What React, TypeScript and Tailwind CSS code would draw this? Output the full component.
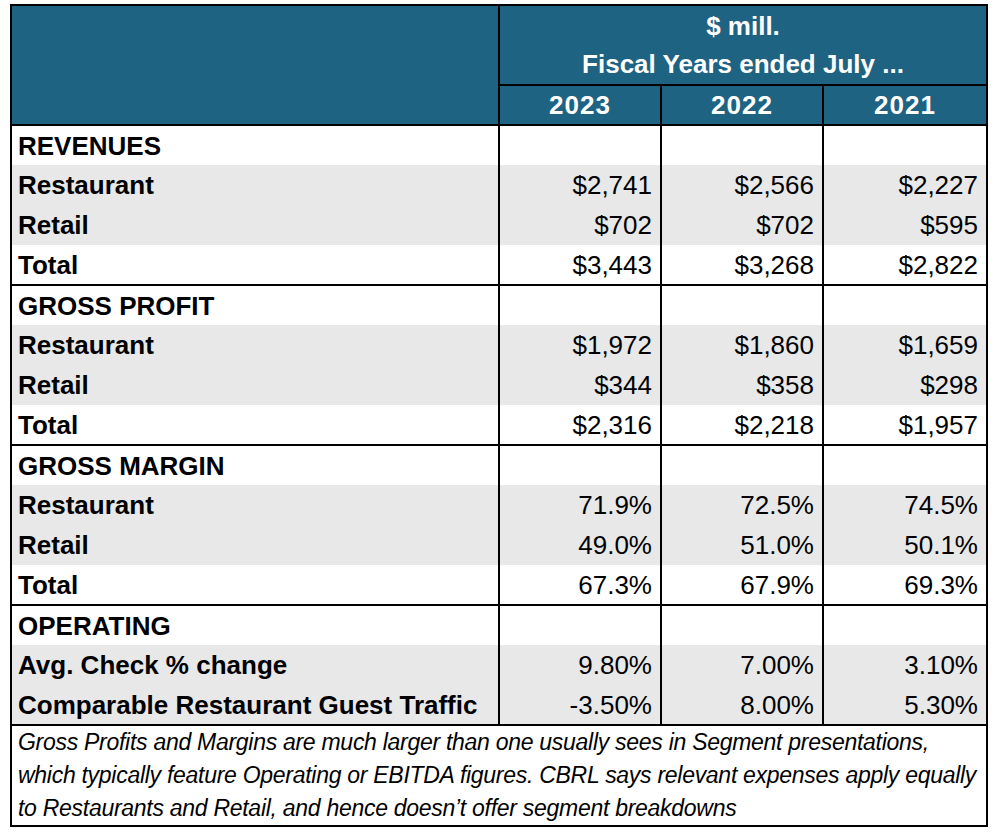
const sections = [
  {
    title: "REVENUES",
    rows: [
      { label: "Restaurant", vals: ["$2,741", "$2,566", "$2,227"] },
      { label: "Retail", vals: ["$702", "$702", "$595"] },
      { label: "Total", vals: ["$3,443", "$3,268", "$2,822"], total: true },
    ],
  },
  {
    title: "GROSS PROFIT",
    rows: [
      { label: "Restaurant", vals: ["$1,972", "$1,860", "$1,659"] },
      { label: "Retail", vals: ["$344", "$358", "$298"] },
      { label: "Total", vals: ["$2,316", "$2,218", "$1,957"], total: true },
    ],
  },
  {
    title: "GROSS MARGIN",
    rows: [
      { label: "Restaurant", vals: ["71.9%", "72.5%", "74.5%"] },
      { label: "Retail", vals: ["49.0%", "51.0%", "50.1%"] },
      { label: "Total", vals: ["67.3%", "67.9%", "69.3%"], total: true },
    ],
  },
  {
    title: "OPERATING",
    rows: [
      { label: "Avg. Check % change", vals: ["9.80%", "7.00%", "3.10%"] },
      { label: "Comparable Restaurant Guest Traffic", vals: ["-3.50%", "8.00%", "5.30%"] },
    ],
  },
];

export default function App() {
  return (
    <div className="w-[996px] h-[838px] bg-white pt-[4px] pl-[10px] font-['Liberation_Sans',Arial,sans-serif] text-black">
      <table className="border-collapse border-2 border-black table-fixed w-[976px]">
        <colgroup>
          <col className="w-[488px]" />
          <col className="w-[162px]" />
          <col className="w-[162px]" />
          <col className="w-[164px]" />
        </colgroup>
        <thead className="bg-[#1f6382] text-white font-bold text-[26px]">
          <tr>
            <th rowSpan={2} className="border-2 border-black" />
            <th colSpan={3} className="border-2 border-black h-[80px] leading-[38px] font-bold">
              <div>$ mill.</div>
              <div>Fiscal Years ended July ...</div>
            </th>
          </tr>
          <tr>
            {["2023", "2022", "2021"].map((y) => (
              <th key={y} className="border-2 border-black h-[40px] leading-[30px] font-bold tracking-[1px]">
                {y}
              </th>
            ))}
          </tr>
        </thead>
        {sections.map((s) => (
          <tbody key={s.title} className="border-2 border-black text-[26px] leading-[30px]">
            <tr className="h-[40px]">
              <td className="border-x-2 border-black pl-[6px] font-bold">{s.title}</td>
              <td className="border-x-2 border-black" />
              <td className="border-x-2 border-black" />
              <td className="border-x-2 border-black" />
            </tr>
            {s.rows.map((r) => (
              <tr key={r.label} className={r.total ? "h-[40px] bg-white" : "h-[40px] bg-[#e8e8e8]"}>
                <td className="border-x-2 border-black pl-[6px] font-bold whitespace-nowrap">{r.label}</td>
                {r.vals.map((v, i) => (
                  <td key={i} className="border-x-2 border-black pr-[8px] text-right">
                    {v}
                  </td>
                ))}
              </tr>
            ))}
          </tbody>
        ))}
        <tfoot>
          <tr>
            <td
              colSpan={4}
              className="border-2 border-black pl-[6px] italic text-[23px] tracking-[-0.28px] leading-[33px] whitespace-nowrap overflow-hidden"
            >
              <div>Gross Profits and Margins are much larger than one usually sees in Segment presentations,</div>
              <div>which typically feature Operating or EBITDA figures. CBRL says relevant expenses apply equally</div>
              <div>to Restaurants and Retail, and hence doesn’t offer segment breakdowns</div>
            </td>
          </tr>
        </tfoot>
      </table>
    </div>
  );
}
